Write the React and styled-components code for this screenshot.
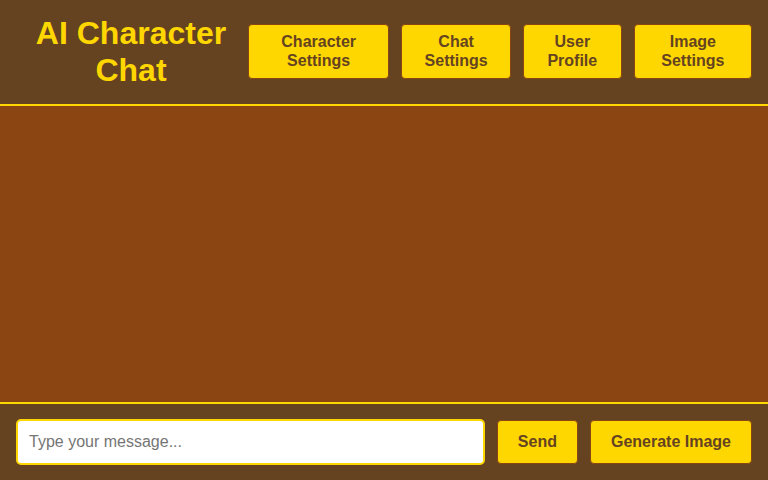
import styled, { createGlobalStyle } from "styled-components";

const GlobalStyle = createGlobalStyle`
  html, body {
    margin: 0;
    padding: 0;
    height: 100%;
  }
  body {
    font-family: "Liberation Sans", Arial, sans-serif;
    background: #8b4513;
  }
  * {
    box-sizing: border-box;
  }
`;

const Page = styled.div`
  display: flex;
  flex-direction: column;
  height: 100vh;
`;

const Header = styled.header`
  display: flex;
  align-items: center;
  gap: 2px;
  padding: 15px 16px;
  background: #654321;
  border-bottom: 2px solid #ffd700;
`;

const Title = styled.h1`
  flex: 0 0 230px;
  margin: 0;
  color: #ffd700;
  font-size: 32px;
  font-weight: bold;
  line-height: 1.15;
  text-align: center;
`;

const Nav = styled.nav`
  display: flex;
  flex: 1;
  min-width: 0;
  gap: 12px;
  justify-content: flex-end;
`;

const Button = styled.button`
  flex: 0 1 auto;
  min-width: 0;
  padding: ${(p) => (p.$compact ? "8px 12px" : "11.5px 20px")};
  background: #ffd700;
  color: #654321;
  border: 1px solid #8b4513;
  border-radius: 4px;
  font-family: "Liberation Sans", Arial, sans-serif;
  font-size: 16px;
  font-weight: bold;
  line-height: 1.15;
  cursor: pointer;
`;

const ChatArea = styled.main`
  flex: 1;
  background: #8b4513;
`;

const Footer = styled.footer`
  display: flex;
  align-items: center;
  gap: 12px;
  padding: 15px 16px;
  background: #654321;
  border-top: 2px solid #ffd700;
`;

const MessageInput = styled.input`
  flex: 1;
  min-width: 0;
  padding: 12px 11px;
  border: 2px solid #ffd700;
  border-radius: 5px;
  background: #fff;
  font-family: "Liberation Sans", Arial, sans-serif;
  font-size: 16px;
  line-height: 1.15;
  color: #333;

  &::placeholder {
    color: #757575;
  }
`;

const navItems = ["Character Settings", "Chat Settings", "User Profile", "Image Settings"];

export default function App() {
  return (
    <>
      <GlobalStyle />
      <Page>
        <Header>
          <Title>AI Character Chat</Title>
          <Nav>
            {navItems.map((item) => (
              <Button key={item} $compact>
                {item}
              </Button>
            ))}
          </Nav>
        </Header>
        <ChatArea />
        <Footer>
          <MessageInput placeholder="Type your message..." />
          <Button>Send</Button>
          <Button>Generate Image</Button>
        </Footer>
      </Page>
    </>
  );
}
